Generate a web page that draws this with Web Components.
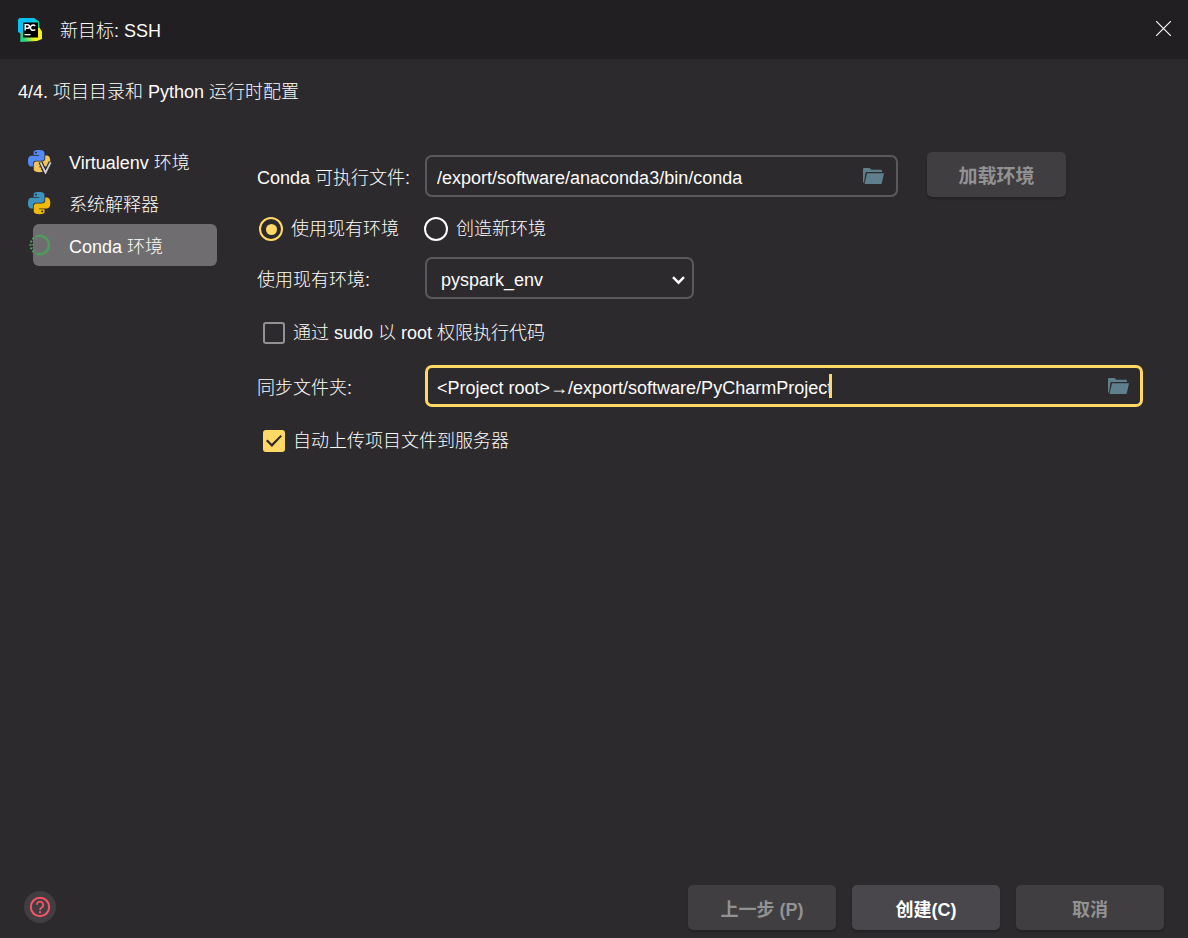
<!DOCTYPE html>
<html lang="zh-CN">
<head>
  <meta charset="UTF-8">
  <meta name="viewport" content="width=device-width, initial-scale=1.0">
  <title>新目标: SSH</title>
  <style>
    body {
      margin: 0;
      background: #2d2a2e;
      color: #fcfcfa;
      font: 300 18px/24px "Liberation Sans", "Noto Sans CJK SC", sans-serif;
    }
  </style>
</head>
<body>
  <target-dialog></target-dialog>

  <script>
    const PYTHON_TOP = "M14.25.18l.9.2.73.26.59.3.45.32.34.34.25.34.16.33.1.3.04.26.02.2-.01.13V8.5l-.05.63-.13.55-.21.46-.26.38-.3.31-.33.25-.35.19-.35.14-.33.1-.3.07-.26.04-.21.02H8.77l-.69.05-.59.14-.5.22-.41.27-.33.32-.27.35-.2.36-.15.37-.1.35-.07.32-.04.27-.02.21v3.06H3.17l-.21-.03-.28-.07-.32-.12-.35-.18-.36-.26-.36-.36-.35-.46-.32-.59-.28-.73-.21-.88-.14-1.05-.05-1.23.06-1.22.16-1.04.24-.87.32-.71.36-.57.4-.44.42-.33.42-.24.4-.16.36-.1.32-.05.24-.01h.16l.06.01h8.16v-.83H6.18l-.01-2.75-.02-.37.05-.34.11-.31.17-.28.25-.26.31-.23.38-.2.44-.18.51-.15.58-.12.64-.1.71-.06.77-.04.84-.02 1.27.05zm-6.3 1.98l-.23.33-.08.41.08.41.23.34.33.22.41.09.41-.09.33-.22.23-.34.08-.41-.08-.41-.23-.33-.33-.22-.41-.09-.41.09z";
    const PYTHON_BOTTOM = "M21.1 6.11l.28.06.32.12.35.18.36.27.36.35.35.47.32.59.28.73.21.88.14 1.04.05 1.23-.06 1.23-.16 1.04-.24.86-.32.71-.36.57-.4.45-.42.33-.42.24-.4.16-.36.09-.32.05-.24.02-.16-.01h-8.22v.82h5.84l.01 2.76.02.36-.05.34-.11.31-.17.29-.25.25-.31.24-.38.2-.44.17-.51.15-.58.13-.64.09-.71.07-.77.04-.84.01-1.27-.04-1.07-.14-.9-.2-.73-.25-.59-.3-.45-.33-.34-.34-.25-.34-.16-.33-.1-.3-.04-.25-.02-.2.01-.13v-5.34l.05-.64.13-.54.21-.46.26-.38.3-.32.33-.24.35-.2.35-.14.33-.1.3-.06.26-.04.21-.02.13-.01h5.84l.69-.05.59-.14.5-.21.41-.28.33-.32.27-.35.2-.36.15-.36.1-.35.07-.32.04-.28.02-.21V6.07h2.09l.14.01zm-6.47 14.25l-.23.33-.08.41.08.41.23.33.33.23.41.08.41-.08.33-.23.23-.33.08-.41-.08-.41-.23-.33-.33-.23-.41-.08-.41.08z";

    const ICONS = {
      pycharm: `
        <svg width="24" height="24" viewBox="0 0 24 24">
          <defs>
            <linearGradient id="a" x1="0" y1="0.6" x2="1" y2="0.4">
              <stop offset="0.1" stop-color="#21d789"/>
              <stop offset="0.6" stop-color="#f4f01e"/>
            </linearGradient>
            <linearGradient id="b" x1="0" y1="0" x2="1" y2="0.4">
              <stop offset="0.6" stop-color="#07c3f2"/>
              <stop offset="1" stop-color="#21d789"/>
            </linearGradient>
          </defs>
          <path d="M19 8L21 9l3 4.500V21L19 23 2.500 24 3 15Z" fill="url(#a)"/>
          <path d="M0 1.500L1.500 0H16l5 3.500.500 6L5 16.500 2.500 15.500 0 14Z" fill="url(#b)"/>
          <path d="M2.500 15L5 14v6L2.500 24Z" fill="#21d789"/>
          <path d="M5 4.500h15v15H5Z" fill="#000"/>
          <path d="M7.200 12.500V6.700H9.600a1.700 1.700 0 0 1 0 3.600H7.200M17.200 7.900a2.700 2.700 0 1 0 0 3.500" fill="none" stroke="#fff" stroke-width="1.500"/>
          <path d="M6.500 16h6v1.300H6.500Z" fill="#fff"/>
        </svg>`,
      close: `
        <svg width="15" height="15" viewBox="0 0 15 15">
          <path d="M0 0l15 15M15 0L0 15" stroke="#fff" stroke-width="1.100"/>
        </svg>`,
      virtualenv: `
        <svg width="24" height="24" viewBox="0 0 26 26">
          <path d="${PYTHON_TOP}" fill="#548af7"/>
          <path d="${PYTHON_BOTTOM}" fill="#f2c55c"/>
          <path d="M13.500 13l5.500 12 5.500-12" fill="none" stroke="#2d2a2e" stroke-width="4.500"/>
          <path d="M13.500 13.500l5.500 11 5.500-11" fill="none" stroke="#ced0d6" stroke-width="2"/>
        </svg>`,
      python: `
        <svg width="24" height="24" viewBox="0 0 26 26">
          <path d="${PYTHON_TOP}" fill="#3e93be"/>
          <path d="${PYTHON_BOTTOM}" fill="#f0b90b"/>
        </svg>`,
      conda: `
        <svg width="24" height="24" viewBox="0 0 24 24" fill="none" stroke="#4f9b5c">
          <path d="M9 2.200A9.200 9.200 0 1 1 9 19.800" stroke-width="2.600"/>
          <path d="M9 2.200A9.200 9.200 0 0 0 9 19.800" stroke-width="2" stroke-dasharray="2 1.500"/>
          <path d="M8.500 5A7 7 0 0 0 8.500 17.500" stroke-width="1.400" stroke-dasharray="1.200 2"/>
        </svg>`,
      folder: `
        <svg width="21" height="16" viewBox="0 0 21 16" fill="#5f7f8c">
          <path d="M0 1a1 1 0 0 1 1-1h5.500L8.500 1.700H18a1 1 0 0 1 1 1V4H3.500a1 1 0 0 0-1 .800L1 14.500H0Z"/>
          <path d="M4 5.300h17l-2.200 9.900a1 1 0 0 1-1 .800H1.500Z"/>
        </svg>`,
      chevron: `
        <svg width="13" height="9" viewBox="0 0 13 9">
          <path d="M1 1.200l5.500 5.500L12 1.200" fill="none" stroke="#fff" stroke-width="2.400"/>
        </svg>`,
      help: `
        <svg width="32" height="32" viewBox="0 0 32 32">
          <circle cx="16" cy="16" r="16" fill="#403e41"/>
          <circle cx="16" cy="16" r="9.200" fill="none" stroke="#fc5369" stroke-width="2"/>
          <path d="M12.800 13.800a3.200 3.200 0 1 1 4.900 2.700c-1.100.700-1.700 1.200-1.700 2.500" fill="none" stroke="#fc5369" stroke-width="1.800"/>
          <path d="M15 20.300h2v2h-2Z" fill="#fc5369"/>
        </svg>`,
    };

    class UiIcon extends HTMLElement {
      constructor() {
        super();
        this.attachShadow({ mode: "open" });
      }

      connectedCallback() {
        this.shadowRoot.innerHTML = /* html */`
        <style>
          :host { display: block; flex: none; }
          svg { display: block; }
        </style>
        ${ICONS[this.getAttribute("name")]}`;
      }
    }

    class UiButton extends HTMLElement {
      constructor() {
        super();
        this.attachShadow({ mode: "open" });
      }

      static get styles() {
        return /* css */`
          :host {
            display: block;
            flex: 0 1 148px;
          }

          button {
            width: 100%;
            height: 45px;
            padding: 4px 0 0;
            border: 0;
            border-radius: 5px;
            background: #403e41;
            box-shadow: 0 2px 2px #242125;
            color: #939293;
            font: inherit;
            font-weight: 700;
          }

          :host([primary]) button {
            background: #49474b;
            color: #fff;
          }
        `;
      }

      connectedCallback() {
        const disabled = this.hasAttribute("primary") ? "" : "disabled";

        this.shadowRoot.innerHTML = /* html */`
        <style>${UiButton.styles}</style>
        <button type="button" ${disabled}><slot></slot></button>`;
      }
    }

    class NavItem extends HTMLElement {
      constructor() {
        super();
        this.attachShadow({ mode: "open" });
      }

      static get styles() {
        return /* css */`
          :host {
            display: block;
          }

          a {
            display: flex;
            align-items: center;
            gap: 17px;
            height: 42px;
            color: inherit;
            text-decoration: none;
            position: relative;
            isolation: isolate;
          }

          ui-icon {
            padding-top: 2px;
          }

          span {
            padding-top: 4px;
          }

          /* the highlight starts a little inside the icon */
          :host([selected]) a::before {
            content: "";
            position: absolute;
            inset: 0 0 0 5px;
            z-index: -1;
            border-radius: 6px;
            background: #6f6d70;
          }
        `;
      }

      connectedCallback() {
        this.shadowRoot.innerHTML = /* html */`
        <style>${NavItem.styles}</style>
        <a href="#${this.getAttribute("icon")}">
          <ui-icon name="${this.getAttribute("icon")}"></ui-icon>
          <span><slot></slot></span>
        </a>`;
      }
    }

    const fieldStyles = /* css */`
      :host {
        display: flex;
        align-items: center;
      }

      .label {
        flex: 0 0 168px;
        padding-top: 4px;
      }

      .box {
        flex: 1;
        height: 42px;
        box-sizing: border-box;
        border-radius: 7px;
        box-shadow: inset 0 0 0 2px #5b595c;
      }
    `;

    class PathField extends HTMLElement {
      constructor() {
        super();
        this.attachShadow({ mode: "open" });
      }

      static get styles() {
        return /* css */`
          ${fieldStyles}

          .box {
            display: flex;
            align-items: center;
            min-width: 0;
            padding: 0 14px 0 12px;
          }

          input {
            flex: 1;
            min-width: 0;
            height: 24px;
            padding: 4px 0 0;
            border: 0;
            outline: 0;
            background: none;
            color: inherit;
            font: inherit;
          }

          button {
            margin-left: auto;
            padding: 0;
            border: 0;
            background: none;
          }

          .caret {
            display: none;
            width: 3px;
            height: 24px;
            margin-left: -3px;
            background: #ffd866;
          }

          :host([active]) .box {
            box-shadow: inset 0 0 0 3px #ffd866;
          }

          :host([active]) input {
            flex: 0 1 auto;
            field-sizing: content;
          }

          :host([active]) .caret {
            display: block;
          }
        `;
      }

      connectedCallback() {
        this.shadowRoot.innerHTML = /* html */`
        <style>${PathField.styles}</style>
        <label class="label" for="path"><slot></slot></label>
        <div class="box">
          <input id="path" type="text" spellcheck="false">
          <span class="caret"></span>
          <button type="button" aria-label="浏览"><ui-icon name="folder"></ui-icon></button>
        </div>`;
        this.shadowRoot.querySelector("input").value = this.getAttribute("value");
      }
    }

    class SelectField extends HTMLElement {
      constructor() {
        super();
        this.attachShadow({ mode: "open" });
      }

      static get styles() {
        return /* css */`
          ${fieldStyles}

          .box {
            display: grid;
            align-items: center;
            flex: 0 1 269px;
          }

          select, ui-icon {
            grid-area: 1 / 1;
          }

          select {
            appearance: none;
            width: 100%;
            height: 42px;
            padding: 4px 30px 0 16px;
            border: 0;
            outline: 0;
            background: none;
            color: inherit;
            font: inherit;
          }

          ui-icon {
            justify-self: end;
            margin-right: 9px;
            padding-top: 4px;
            pointer-events: none;
          }
        `;
      }

      connectedCallback() {
        this.shadowRoot.innerHTML = /* html */`
        <style>${SelectField.styles}</style>
        <label class="label" for="env"><slot></slot></label>
        <div class="box">
          <select id="env"><option>${this.getAttribute("value")}</option></select>
          <ui-icon name="chevron"></ui-icon>
        </div>`;
      }
    }

    class ChoiceField extends HTMLElement {
      constructor() {
        super();
        this.attachShadow({ mode: "open" });
      }

      static get styles() {
        return /* css */`
          :host {
            display: block;
          }

          label {
            display: flex;
            align-items: center;
            gap: 8px;
          }

          input {
            appearance: none;
            display: grid;
            place-items: center;
            flex: none;
            box-sizing: border-box;
            margin: 0;
          }

          input[type="radio"] {
            width: 24px;
            height: 24px;
            border: 2px solid #fcfcfa;
            border-radius: 50%;
          }

          input[type="radio"]:checked {
            border-color: #ffd866;
          }

          input[type="radio"]:checked::before {
            content: "";
            width: 11px;
            height: 11px;
            border-radius: 50%;
            background: #ffd866;
          }

          input[type="checkbox"] {
            width: 22px;
            height: 22px;
            border: 2px solid #939293;
            border-radius: 3px;
          }

          input[type="checkbox"]:checked {
            border-color: #ffd866;
            background: #ffd866;
          }

          input[type="checkbox"]:checked::before {
            content: "";
            width: 16px;
            height: 12px;
            background: #2d2a2e;
            clip-path: polygon(0 50%, 10% 38%, 36% 72%, 91% 0, 100% 11%, 37% 100%);
          }
        `;
      }

      connectedCallback() {
        const checked = this.hasAttribute("checked") ? "checked" : "";

        this.shadowRoot.innerHTML = /* html */`
        <style>${ChoiceField.styles}</style>
        <label>
          <input type="${this.getAttribute("type")}" ${checked}>
          <span><slot></slot></span>
        </label>`;
      }
    }

    class TargetDialog extends HTMLElement {
      constructor() {
        super();
        this.attachShadow({ mode: "open" });
      }

      static get styles() {
        return /* css */`
          :host {
            display: flex;
            flex-direction: column;
            min-height: 100vh;
          }

          header {
            display: flex;
            align-items: center;
            gap: 18px;
            height: 59px;
            padding: 0 17px 0 18px;
            box-sizing: border-box;
            background: #221f22;
          }

          h1, h2 {
            margin: 0;
            font: inherit;
          }

          h1 {
            padding-top: 2px;
          }

          .close {
            margin-left: auto;
            padding: 0 0 2px;
            border: 0;
            background: none;
          }

          h2 {
            padding: 21px 18px 36px;
          }

          main {
            flex: 1;
            display: flex;
            gap: 40px;
            padding: 0 45px 0 28px;
          }

          nav {
            flex: 0 0 189px;
          }

          form {
            flex: 1;
            display: flex;
            flex-direction: column;
            gap: 16px;
            min-width: 0;
            padding-top: 12px;
          }

          .row {
            display: flex;
            align-items: flex-end;
            gap: 29px;
            padding-bottom: 4px;
          }

          .row path-field {
            flex: 0 1 641px;
          }

          .row ui-button {
            flex: 0 0 139px;
            font-size: 19px;
          }

          .radios {
            display: flex;
            gap: 25px;
            padding-left: 2px;
          }

          .check {
            padding: 6px 6px 4px;
          }

          footer {
            display: flex;
            align-items: center;
            gap: 16px;
            padding: 0 24px 8px;
          }

          .help {
            margin-right: auto;
            padding: 0 0 2px;
            border: 0;
            background: none;
          }
        `;
      }

      connectedCallback() {
        this.render();
      }

      render() {
        this.shadowRoot.innerHTML = /* html */`
        <style>${TargetDialog.styles}</style>
        <header>
          <ui-icon name="pycharm"></ui-icon>
          <h1>新目标: SSH</h1>
          <button class="close" type="button" aria-label="关闭"><ui-icon name="close"></ui-icon></button>
        </header>
        <h2>4/4. 项目目录和 Python 运行时配置</h2>
        <main>
          <nav>
            <nav-item icon="virtualenv">Virtualenv 环境</nav-item>
            <nav-item icon="python">系统解释器</nav-item>
            <nav-item icon="conda" selected>Conda 环境</nav-item>
          </nav>
          <form>
            <div class="row">
              <path-field value="/export/software/anaconda3/bin/conda">Conda 可执行文件:</path-field>
              <ui-button>加载环境</ui-button>
            </div>
            <div class="radios">
              <choice-field type="radio" checked>使用现有环境</choice-field>
              <choice-field type="radio">创造新环境</choice-field>
            </div>
            <select-field value="pyspark_env">使用现有环境:</select-field>
            <choice-field class="check" type="checkbox">通过 sudo 以 root 权限执行代码</choice-field>
            <path-field value="&lt;Project root&gt;→/export/software/PyCharmProject" active>同步文件夹:</path-field>
            <choice-field class="check" type="checkbox" checked>自动上传项目文件到服务器</choice-field>
          </form>
        </main>
        <footer>
          <button class="help" type="button" aria-label="帮助"><ui-icon name="help"></ui-icon></button>
          <ui-button>上一步 (P)</ui-button>
          <ui-button primary>创建(C)</ui-button>
          <ui-button>取消</ui-button>
        </footer>`;
      }
    }

    customElements.define("ui-icon", UiIcon);
    customElements.define("ui-button", UiButton);
    customElements.define("nav-item", NavItem);
    customElements.define("path-field", PathField);
    customElements.define("select-field", SelectField);
    customElements.define("choice-field", ChoiceField);
    customElements.define("target-dialog", TargetDialog);
  </script>
</body>
</html>
